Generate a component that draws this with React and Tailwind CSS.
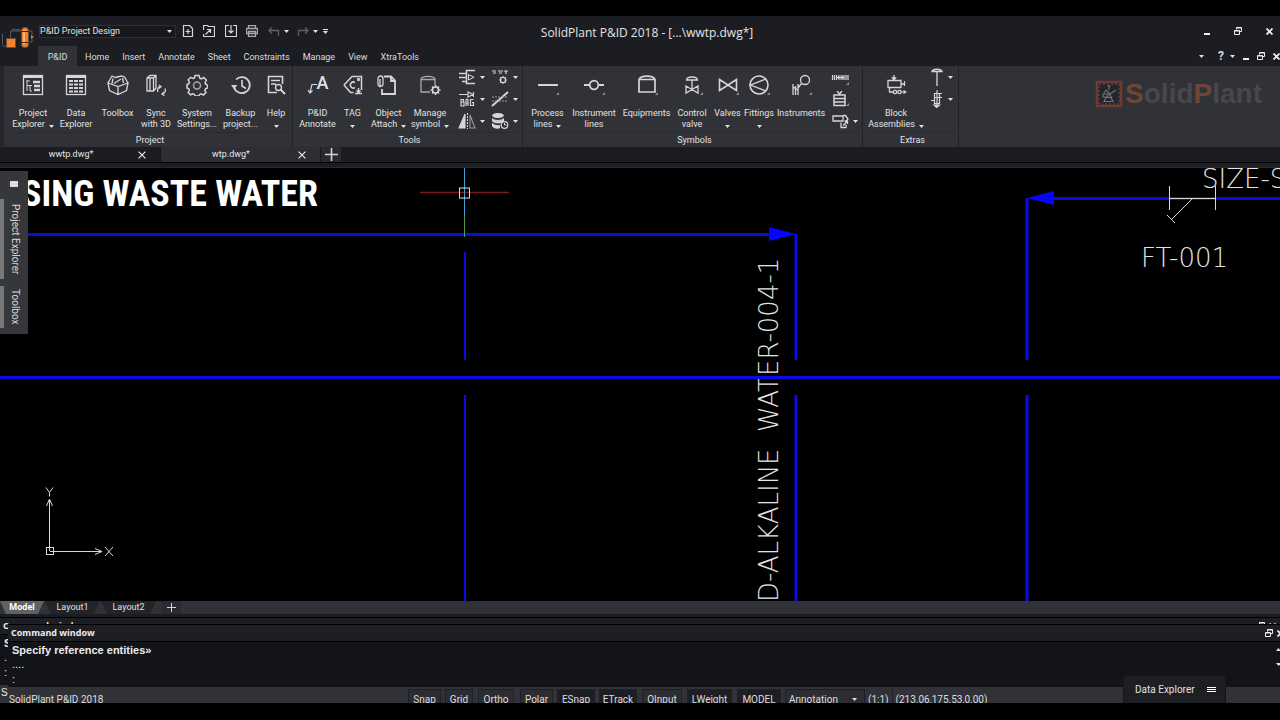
import clsx from "clsx";

const INK = "#d6d6d8";

const Icon = ({ w = 22, h = 22, children, className, sw = 1.3 }) => (
  <svg
    width={w}
    height={h}
    viewBox={`0 0 ${w} ${h}`}
    fill="none"
    stroke={INK}
    strokeWidth={sw}
    className={clsx("shrink-0", className)}
    aria-hidden="true"
  >
    {children}
  </svg>
);

const Caret = ({ className }) => (
  <svg width="5" height="3" viewBox="0 0 5 3" className={clsx("shrink-0", className)} aria-hidden="true">
    <path d="M0 0h5L2.5 3z" fill="#e2e2e2" />
  </svg>
);

const Corner = () => <path d="M22 18v3h-3z" fill="#8c8c90" stroke="none" />;

/* ---------- ribbon icons ---------- */

const icons = {
  projectExplorer: (
    <Icon>
      <rect x="1.5" y="1.5" width="19" height="19" />
      <path d="M1 3h20" strokeWidth="2" />
      <path d="M5 6v11M5 7h3M5 11.5h5M8 11.5V17h2" strokeWidth="1" />
      <path d="M11 8h7M12 12h6M12 16h6" strokeWidth="2.4" />
    </Icon>
  ),
  dataExplorer: (
    <Icon>
      <rect x="1.5" y="1.5" width="19" height="19" />
      <path d="M1 3h20" strokeWidth="2" />
      <path d="M4 7h14M4 10.5h14M4 14h14M4 17.5h14" strokeWidth="2.2" strokeDasharray="4 1" />
    </Icon>
  ),
  toolbox: (
    <Icon>
      <path d="M1 9l10 3.500 10-3.500-1.500 7.500-8.500 4-8.500-4zM11 12.500V20M1 9l4-7 3 1.500M21 9l-3.500-6-3-1L8 3.500M5 9.500l1-5M16.500 9l-1-5M7 9.500l7-4.500" />
    </Icon>
  ),
  sync: (
    <Icon>
      <path d="M2 4l3-2.500h6V14l-2.500 3H2zM2 4h6.500V17M8.500 4L11 1.500M5 4v13" strokeWidth="1.300" />
      <path d="M13 18a4 4 0 0 1 2-5.500M20 14.500a4 4 0 0 1-2.500 5.500M14 11l2 1.500-2 2M19.500 21.500l-2.500-1.500 2-2" strokeWidth="1.300" />
    </Icon>
  ),
  gear: (
    <Icon sw={1.5}>
      <path d="M9 1.500h4l.8 2.600 1.600.7 2.400-1.300 2.600 2.700-1.300 2.500.6 1.500 1.800.8v3l-2 .9-.6 1.500 1 2.200-2.500 2.400-2.200-1.100-1.500.6-.8 1.500H9.200l-.9-1.700-1.500-.6-2.300 1.100-2.300-2.300 1.100-2.300-.6-1.500-1.700-.8V10.500l1.800-.8.6-1.500-1.200-2.400 2.500-2.500 2.300 1.200 1.500-.6z" />
      <circle cx="11" cy="11.500" r="3.500" stroke="#a8a8ab" />
    </Icon>
  ),
  backup: (
    <Icon>
      <path d="M4 13A8 8 0 1 0 6 5.500" strokeWidth="1.800" />
      <path d="M1 11l3 4 3.500-4z" fill={INK} stroke="none" />
      <path d="M12 6v6l4 2.500" strokeWidth="1.600" />
    </Icon>
  ),
  help: (
    <Icon>
      <path d="M12 18.500H3.500v-16h14V10M6 6.500h9M6 10h5" strokeWidth="1.600" />
      <circle cx="13.500" cy="13.500" r="3" strokeWidth="1.400" />
      <path d="M15.500 15.500L20 20" strokeWidth="2" />
    </Icon>
  ),
  tag: (
    <Icon>
      <path d="M2 11L10 2.500h9.500V16M2 11l6.500 7.500h3" strokeWidth="1.500" />
      <path d="M13 8.500a3 3 0 1 0 0 5M13 19.500h7M16.500 14v5M14.500 16.500l2 2 2-2" strokeWidth="1.500" />
      <circle cx="16.500" cy="5.500" r="1" />
    </Icon>
  ),
  attach: (
    <Icon className="-ml-1">
      <path d="M8 2.500h7l4 4V20H6v-5M15 2.500V7h4" strokeWidth="1.800" />
      <path d="M2 4.500a2.500 2.500 0 0 1 5 0v6a1.500 1.500 0 0 1-3 0V5M2 4.500v6a2.500 2.500 0 0 0 3 2" strokeWidth="1.300" />
    </Icon>
  ),
  manage: (
    <Icon>
      <path d="M2 5c1-3.500 13-3.500 14 0v6M2 5v13h9M2 5.500h14" stroke="#a8a8ab" />
      <circle cx="16.500" cy="16" r="3" strokeWidth="1.500" />
      <path d="M16.500 11v2M16.500 19v2M11.500 16h2M19.500 16h2M13 12.500l1.500 1.500M18.500 18l1.500 1.500M13 19.500l1.500-1.500M18.500 14l1.500-1.500" strokeWidth="1.600" />
    </Icon>
  ),
  process: (
    <Icon>
      <path d="M1 11h20" strokeWidth="2" />
      <Corner />
    </Icon>
  ),
  instrumentLine: (
    <Icon>
      <path d="M1 11h5.500M15.500 11H21" strokeWidth="2" />
      <circle cx="11" cy="11" r="4.300" strokeWidth="1.700" />
      <Corner />
    </Icon>
  ),
  equipment: (
    <Icon>
      <path d="M3 5.500V18h16V5.500c-1.500-4.500-14.500-4.500-16 0zM3 5.500h16" strokeWidth="1.700" />
      <Corner />
    </Icon>
  ),
  controlValve: (
    <Icon>
      <path d="M5.500 6C6 2 16 2 16.500 6zM11 6v9M5 12l12 7v-7L5 19z" />
      <Corner />
    </Icon>
  ),
  valve: (
    <Icon>
      <path d="M2.500 5.500v11l17-11v11z" strokeWidth="1.600" />
      <Corner />
    </Icon>
  ),
  fitting: (
    <Icon>
      <circle cx="11" cy="11" r="9" strokeWidth="1.600" />
      <path d="M18 5L2.500 11 18 17" />
      <Corner />
    </Icon>
  ),
  instrument: (
    <Icon>
      <circle cx="15" cy="6" r="4.500" />
      <path d="M11.500 9.500L8 14M3 10v11M5.500 12v9M8 10v11M3 13l5 3" />
      <Corner />
    </Icon>
  ),
  block: (
    <Icon>
      <path d="M3 6.500h13v7H3zM9 1v5M16 10h4M19.500 7v5M4.500 13.500V18h4" />
      <path d="M9 6L7.500 4h3z" />
      <circle cx="10" cy="18" r="1.700" />
      <circle cx="14.500" cy="18" r="1.700" />
      <path d="M16 18h4M18.500 16.500l2.500 1.500-2.500 1.500" strokeWidth="1.200" />
    </Icon>
  ),
};

const small = {
  mapping: (
    <Icon w={18} h={16} sw={1.5}>
      <path d="M1 4.500h7M1 8.500h7M4 12.500h4M17 1.500H8.500v3M17 14.500H8.500v-3M8.500 4v8" />
      <path d="M10.500 5.500v5.500l5.500-2.750z" strokeWidth="1" />
    </Icon>
  ),
  lineTag: (
    <Icon w={18} h={16} sw={1.1}>
      <path d="M1 3.500h9M10 1v5l5-2.500zM15.500 1v5" />
      <path d="M3 8.500h2.500v2.500H3zM3 11h3v4H3zM3 8v7M8 15V9l1-1 1 1v6M8 12h2M15.500 8.500H12.500v6h3v-3H14" strokeWidth="1.200" />
    </Icon>
  ),
  mirror: (
    <Icon w={18} h={16} sw={1.1}>
      <path d="M7 1v14H1z" fill={INK} />
      <path d="M9.500 0v16" strokeDasharray="2 1" />
      <path d="M12 2v13h5z" stroke="#9a9a9d" />
    </Icon>
  ),
  tagGear: (
    <Icon w={18} h={16} sw={1.2}>
      <path d="M1 2h4M2 4h3M7 2h5M13 2h4M15 2v3M8 4h3" />
      <circle cx="12" cy="11" r="2.500" />
      <path d="M12 7v1.500M12 13.500V15M8 11h1.500M14.500 11H16M9.200 8.200l1 1M13.800 12.800l1 1M9.200 13.800l1-1M13.800 9.200l1-1" />
    </Icon>
  ),
  breakLine: (
    <Icon w={18} h={16} sw={1.2}>
      <path d="M1 15L17 1" strokeWidth="2" />
      <path d="M1 6h8M11 6h6M1 10h5M8 10h9" strokeDasharray="2 1" stroke="#9a9a9d" />
    </Icon>
  ),
  database: (
    <Icon w={18} h={16} sw={1}>
      <ellipse cx="7" cy="2.500" rx="5.500" ry="2" fill={INK} />
      <path d="M1.500 5.500c1 2.500 10 2.500 11 0v2.500c-1 2.500-10 2.500-11 0zM1.500 10.500c1 2 6 2.500 7 2v2.500c-3 .5-6.500 0-7-2z" fill={INK} />
      <circle cx="13.500" cy="12" r="3.300" fill="#313237" strokeWidth="1.200" />
      <path d="M13.500 10v2h2" />
    </Icon>
  ),
  flange: (
    <Icon w={18} h={16} sw={1.2}>
      <path d="M1.500 6v5M3.500 6v5M5.500 6v5M13 6v5M15 6v5M17 6v5M5 8.500h8" />
      <path d="M7.500 7h4v3h-4z" />
      <path d="M18 13v3h-3z" fill="#8c8c90" stroke="none" />
    </Icon>
  ),
  column: (
    <Icon w={18} h={16} sw={1.5}>
      <path d="M3 4h11v10.500H3zM3 7.500h11M3 11h11M6 0l2.500 3L11 0" />
      <path d="M18 12v3h-3z" fill="#8c8c90" stroke="none" />
    </Icon>
  ),
  nozzle: (
    <Icon w={18} h={16} sw={1.3}>
      <path d="M2 3h10v5H2zM12 2.500h2.500L17 6l-2.500 3" />
      <path d="M10 9.500v5h5v-3M12 12.500L16.500 8M13.500 8h3v3" />
    </Icon>
  ),
  tee: (
    <Icon w={14} h={18} sw={1.3}>
      <path d="M2 3.500C3 .5 11 .5 12 3.500zM7 3.500V18" />
    </Icon>
  ),
  vessel: (
    <Icon w={14} h={18} sw={1.2}>
      <path d="M4.500 3.500h5v10h-5zM7 0v16M4 7.500h8M9 3.500h3M1 10.500h4" />
      <path d="M4 15h5.500l-2.750 2.500z" fill={INK} />
    </Icon>
  ),
};

/* ---------- ribbon ---------- */

const RibbonButton = ({ icon, lines, caret, className }) => (
  <button
    type="button"
    className={clsx("flex shrink-0 flex-col items-center pt-2 text-[9px] leading-[11px] whitespace-nowrap", className)}
  >
    {icon}
    <span className="mt-3">{lines[0]}</span>
    <span className="flex h-[11px] items-center gap-1">
      {lines[1]}
      {caret && <Caret className="mt-1" />}
    </span>
  </button>
);

const SmallButton = ({ label, icon, caret = true }) => (
  <button type="button" aria-label={label} className="flex h-[22px] items-center gap-1">
    {icon}
    {caret && <Caret />}
  </button>
);

const Group = ({ title, children, className, pad }) => (
  <section className={clsx("flex shrink-0 flex-col border-r border-[#212227]", className)}>
    <div className={clsx("flex h-[66px]", pad)}>{children}</div>
    <h2 className="mr-0.5 ml-1.5 h-[15px] border-t border-[#2a2b30] text-center text-[9px] leading-[15px]">{title}</h2>
  </section>
);

const Ribbon = () => (
  <div className="flex items-start border-l-4 border-[#26262c] bg-[#313237] text-[#e2e2e4]">
    <Group title="Project" className="w-[289px]" pad="pl-2">
      <RibbonButton className="w-[42px]" icon={icons.projectExplorer} lines={["Project", "Explorer"]} caret />
      <RibbonButton className="w-11" icon={icons.dataExplorer} lines={["Data", "Explorer"]} />
      <RibbonButton className="w-[39px]" icon={icons.toolbox} lines={["Toolbox"]} />
      <RibbonButton className="w-[38px]" icon={icons.sync} lines={["Sync", "with 3D"]} />
      <RibbonButton className="w-11" icon={icons.gear} lines={["System", "Settings..."]} />
      <RibbonButton className="w-[43px]" icon={icons.backup} lines={["Backup", "project..."]} />
      <RibbonButton className="w-7" icon={icons.help} lines={["Help"]} caret />
    </Group>
    <Group title="Tools" className="w-[230px]" pad="pl-1.5">
      <RibbonButton
        className="w-[37px]"
        icon={
          <span className="relative flex h-[22px] w-[22px] justify-end">
            <Icon className="absolute inset-0" sw={1.2}>
              <path d="M10 10.500H5L3 18M1 16l2 3 2.500-2.500" />
            </Icon>
            <span className="text-[18px] leading-[18px] font-medium">A</span>
          </span>
        }
        lines={["P&ID", "Annotate"]}
      />
      <RibbonButton className="w-[33px]" icon={icons.tag} lines={["TAG"]} caret />
      <RibbonButton className="w-[39px]" icon={icons.attach} lines={["Object", "Attach"]} caret />
      <RibbonButton className="w-11" icon={icons.manage} lines={["Manage", "symbol"]} caret />
      <div className="grid grid-cols-[33px_33px] content-start pl-1.5">
        <SmallButton label="Map lines" icon={small.mapping} />
        <SmallButton label="Tag settings" icon={small.tagGear} />
        <SmallButton label="Line tag" icon={small.lineTag} />
        <SmallButton label="Break line" icon={small.breakLine} />
        <SmallButton label="Mirror" icon={small.mirror} />
        <SmallButton label="Database" icon={small.database} />
      </div>
    </Group>
    <Group title="Symbols" className="w-[340px]" pad="pl-[5px]">
      <RibbonButton className="w-[39px]" icon={icons.process} lines={["Process", "lines"]} caret />
      <RibbonButton className="w-[54px]" icon={icons.instrumentLine} lines={["Instrument", "lines"]} />
      <RibbonButton className="w-[51px]" icon={icons.equipment} lines={["Equipments"]} />
      <RibbonButton className="w-10" icon={icons.controlValve} lines={["Control", "valve"]} />
      <RibbonButton className="w-[31px]" icon={icons.valve} lines={["Valves"]} caret />
      <RibbonButton className="w-8" icon={icons.fitting} lines={["Fittings"]} caret />
      <RibbonButton className="w-[52px]" icon={icons.instrument} lines={["Instruments"]} />
      <div className="flex flex-col pl-1">
        <SmallButton label="Flange" icon={small.flange} caret={false} />
        <SmallButton label="Column" icon={small.column} caret={false} />
        <SmallButton label="Nozzle" icon={small.nozzle} />
      </div>
    </Group>
    <Group title="Extras" className="w-24" pad="pl-[5px]">
      <RibbonButton className="w-14" icon={icons.block} lines={["Block", "Assemblies"]} caret />
      <div className="flex flex-col pl-1.5">
        <SmallButton label="Tee" icon={small.tee} />
        <SmallButton label="Vessel" icon={small.vessel} />
      </div>
    </Group>
    <div className="ml-auto flex items-center gap-0.5 pt-3 pr-[18px]">
      <svg width="28" height="28" viewBox="0 0 28 28" fill="none" aria-hidden="true">
        <rect x="2" y="2" width="24" height="24" fill="#24252a" stroke="#703a30" strokeWidth="2.500" />
        <path d="M4 4h20v20H4z" stroke="#8a5a4c" strokeWidth=".8" strokeDasharray="2 2" />
        <path d="M9 21.500h9l-2-4h-5zM8 14h5v3H8zM9 13l2-3 4 4 6-4M14 5v5M12.500 6h3M14 14l3 4" stroke="#77777a" strokeWidth="1.100" />
      </svg>
      <span className="font-['Liberation_Sans',sans-serif] text-[28px] leading-8 font-bold text-[#47484d]">
        <span className="text-[#6d4638]">S</span>olid<span className="text-[#6d4638]">P</span>lant
      </span>
    </div>
  </div>
);

/* ---------- title bar and menus ---------- */

const Restore = ({ className }) => (
  <svg width="8" height="8" viewBox="0 0 8 8" fill="none" stroke="#f0f0f0" className={className} aria-hidden="true">
    <path d="M2.500 2.500V.5h5v4h-2M.5 3.500h5v4h-5zM.5 4h5M2.500 1h5" />
  </svg>
);

const Close = ({ className, s = 7, w = 1.8 }) => (
  <svg width={s} height={s} viewBox="0 0 7 7" stroke="#f0f0f0" strokeWidth={w} className={className} aria-hidden="true">
    <path d="M.5 .5l6 6M6.500 .5l-6 6" />
  </svg>
);

const Minimize = () => (
  <svg width="6" height="7" viewBox="0 0 6 7" aria-hidden="true">
    <path d="M0 5h6v2H0z" fill="#f0f0f0" />
  </svg>
);

const AppLogo = () => (
  <svg width="34" height="26" viewBox="0 0 34 26" fill="none" aria-hidden="true">
    <path d="M2.500 8v10M10.500 12V5h11M12 5a2 2 0 0 1 4 0 2 2 0 0 1 4 0M29 5h3v4M32 13v3h-3M2 20h4" stroke="#5a5a5e" />
    <rect x="6.500" y="12.500" width="9" height="9" fill="#f08432" stroke="#6b4a35" />
    <rect x="21.500" y="1.500" width="7" height="20" rx="3" fill="#ee7f2d" stroke="#6b4a35" />
    <path d="M24 4v14" stroke="#ffc58c" strokeWidth="1.500" />
    <path d="M21 5.500h8M21 16.500h8" stroke="#33251f" strokeWidth="1.200" />
    <path d="M31 9l3 2-3 2z" fill="#e07a30" />
  </svg>
);

const QuickAccess = () => (
  <div className="flex items-center">
    <button type="button" aria-label="New" className="w-[21px]">
      <Icon w={12} h={12} sw={1.2}>
        <path d="M1.500.5h6l3 3v8h-9zM6 4v5M3.500 6.500h5" />
      </Icon>
    </button>
    <button type="button" aria-label="Open" className="w-[22px]">
      <Icon w={12} h={12} sw={1.2}>
        <path d="M.5 5V.5h4l1 1h6v10H.5V9M2.500 9.500L7.500 4.500M4 4.500h3.500V8" />
      </Icon>
    </button>
    <button type="button" aria-label="Save" className="w-[21px]">
      <Icon w={12} h={12} sw={1.2}>
        <path d="M4 .5H.5v11h11V.500H8M6 0v8M3.500 5.500L6 8l2.500-2.500" />
      </Icon>
    </button>
    <button type="button" aria-label="Print" className="w-[22px]">
      <Icon w={12} h={12} sw={1.3}>
        <path d="M2.500 3.500v-3h7v3M2.500 8.500h-2v-5h11v5h-2M2.500 6.500h7v5h-7zM3 8.500h6" stroke="#a9a9ab" />
      </Icon>
    </button>
    <button type="button" aria-label="Undo" className="flex w-[29px] items-center gap-1">
      <Icon w={12} h={12}>
        <path d="M10.500 11V5.500H1.500M4 2.500l-3 3 3 3" stroke="#5f6064" />
      </Icon>
      <Caret />
    </button>
    <button type="button" aria-label="Redo" className="flex w-[26px] items-center gap-1">
      <Icon w={12} h={12}>
        <path d="M1.500 11V5.500h9M8 2.500l3 3-3 3" stroke="#5f6064" />
      </Icon>
      <Caret />
    </button>
    <button type="button" aria-label="Customize" className="flex flex-col items-center gap-px">
      <span className="h-px w-[5px] bg-[#e8e8e8]" />
      <Caret />
    </button>
  </div>
);

const TitleBar = () => (
  <header className="flex h-[30px] items-center pl-3.5 text-[#e4e4e6]">
    <div className="flex flex-1 items-center gap-[6px]">
      <label className="relative ml-[25px] flex w-[137px]">
        <span className="sr-only">Workspace</span>
        <select className="h-[13px] w-full appearance-none border border-[#2e2f34] bg-[#17181c] text-[9px] leading-[11px] outline-none">
          <option>P&amp;ID Project Design</option>
        </select>
        <Caret className="absolute top-[5px] right-1" />
      </label>
      <QuickAccess />
    </div>
    <h1 className="pt-1 font-['Open_Sans',sans-serif] text-[12px] leading-4 whitespace-pre">
      SolidPlant P&amp;ID 2018 - [...\wwtp.dwg*]
    </h1>
    <div className="flex flex-1 items-center justify-end gap-6">
      <button type="button" aria-label="Minimize"><Minimize /></button>
      <button type="button" aria-label="Restore"><Restore /></button>
      <button type="button" aria-label="Close" className="mr-[7px]"><Close /></button>
    </div>
  </header>
);

const menus = ["Home", "Insert", "Annotate", "Sheet", "Constraints", "Manage", "View", "XtraTools"];

const MenuBar = () => (
  <nav className="flex h-5 items-center pl-[38px] text-[9px] leading-5 text-[#dcdcde]">
    <button type="button" className="h-5 w-[39px] bg-[#313237] pt-px">P&amp;ID</button>
    <div className="flex gap-[13px] pt-px pl-2">
      {menus.map((m) => (
        <button type="button" key={m}>{m}</button>
      ))}
    </div>
    <div className="ml-auto flex items-center gap-2">
      <button type="button" aria-label="Collapse ribbon" className="pr-1.5"><Caret /></button>
      <button type="button" aria-label="Help" className="flex items-center gap-1.5 text-[12px] font-bold">
        ? <Caret />
      </button>
      <button type="button" aria-label="Minimize drawing"><Minimize /></button>
      <button type="button" aria-label="Restore drawing"><Restore /></button>
      <button type="button" aria-label="Close drawing"><Close /></button>
    </div>
  </nav>
);

const DocTab = ({ name, active }) => (
  <div className={clsx("flex h-[15px] w-40 items-center border-r border-[#17181c]", active ? "bg-[#1c1d22]" : "bg-[#2d2e33]")}>
    <button type="button" className="flex-1 pl-[7px] text-center">{name}</button>
    <button type="button" aria-label={`Close ${name}`} className="mr-3.5 ml-1 flex">
      <Close s={8} w={1} />
    </button>
  </div>
);

const DocTabs = () => (
  <div className="border-b border-[#2a2b2e] bg-[#1c1d22] pb-1">
    <div className="flex h-4 border-b border-black pl-px text-[9px] leading-[15px] text-[#e4e4e6]">
      <DocTab name="wwtp.dwg*" active />
      <DocTab name="wtp.dwg*" />
      <button type="button" aria-label="New drawing" className="flex h-[15px] w-5 items-center justify-center bg-[#2a2b30]">
        <Icon w={13} h={13} sw={1.6}>
          <path d="M6.500 0v13M0 6.500h13" />
        </Icon>
      </button>
    </div>
  </div>
);

/* ---------- drawing area ---------- */

const Drawing = () => (
  <svg className="absolute inset-0 h-full w-full" aria-label="Drawing">
    <g stroke="#d8d8d8" strokeWidth="1" fill="none">
      <path d="M49.500 383V332M46.500 338l3-7 3 7M50 383.500h52M95 380.500l7 3-7 3" />
      <rect x="46.500" y="379.500" width="7" height="7" />
      <path d="M46 319.500l3.500 5 3.500-5M49.500 324.500v4M105 379l8 9M113 379l-8 9" />
    </g>
    <text x="22" y="38" fill="#fff" fontSize="36" className="font-['Roboto_Condensed',sans-serif] font-bold">
      SING WASTE WATER
    </text>
    <g fill="#e4e4e4" fontSize="26" className="font-['DejaVu_Sans',sans-serif] font-extralight">
      <text x="1202" y="20">SIZE-S</text>
      <text x="1141" y="99">FT-001</text>
      <text transform="translate(778 434) rotate(-90)" xmlSpace="preserve">
        {"D-ALKALINE  WATER-004-1"}
      </text>
    </g>
    <g stroke="#0b0be6" strokeWidth="3" fill="none">
      <path d="M28 66.500h748M796 66v126M796 227v210M0 209.500h4000M1027 30v162M1027 227v210M1050 30.500h2950" />
      <path d="M465 84v108M465 227v210" strokeWidth="2" />
    </g>
    <path d="M769 59l27 7-27 7zM1054 23l-27 7 27 7z" fill="#0505ff" />
    <path d="M1169 30.500h46M1169.500 18v24M1215.500 18v24M1192 31l-20 20M1167 47l8 8" stroke="#d8d8d8" fill="none" />
    <path d="M420 24.500h89" stroke="#7a1a1a" strokeWidth="1.500" />
    <path d="M464.500 0v48" stroke="#3f9fd8" />
    <path d="M464.500 48v21" stroke="#4c9a4c" />
    <rect x="459.500" y="20" width="10" height="10" fill="none" stroke="#dcdcdc" />
  </svg>
);

const PaletteTab = ({ name, className }) => (
  <button
    type="button"
    className={clsx("flex w-full items-center justify-center border-l-4 border-[#77787b] pr-0.5 text-[10px] leading-3", className)}
  >
    <span className="[writing-mode:vertical-rl]">{name}</span>
  </button>
);

const SidePalette = () => (
  <aside className="absolute top-[3px] left-0 flex w-7 flex-col items-center gap-[7px] bg-[#36373b] pb-1.5 text-[#d6d6d8]">
    <button type="button" aria-label="Pin palette" className="mt-2.5 mb-[5px] h-1.5 w-2 bg-[#dcdcdc]" />
    <PaletteTab name="Project Explorer" className="h-20" />
    <PaletteTab name="Toolbox" className="h-[42px]" />
  </aside>
);

/* ---------- layout tabs, command window, status ---------- */

const LayoutTab = ({ name, active }) => (
  <button
    type="button"
    className={clsx(
      "h-[13px] text-center [clip-path:polygon(0_0,100%_0,calc(100%_-_6px)_100%,6px_100%)]",
      active ? "w-11 bg-[#606163] font-bold text-white" : "w-[55px] bg-[#232429]"
    )}
  >
    {name}
  </button>
);

const LayoutTabs = () => (
  <div className="flex h-[13px] gap-px bg-[#313237] text-[9px] leading-[13px] text-[#e0e0e2]">
    <LayoutTab name="Model" active />
    <LayoutTab name="Layout1" />
    <LayoutTab name="Layout2" />
    <button type="button" aria-label="New layout" className="ml-1 flex w-5 items-center justify-center bg-[#2a2b30]">
      <Icon w={9} h={9} sw={1}>
        <path d="M4.500 0v9M0 4.500h9" />
      </Icon>
    </button>
  </div>
);

const WindowTitle = ({ className }) => (
  <div className={clsx("flex h-[17px] shrink-0 items-center border-b border-black bg-[#1e1f24] pl-[3px]", className)}>
    <h2 className="font-['Open_Sans',sans-serif] text-[9px] leading-4 font-bold">Command window</h2>
    <span className="ml-auto flex items-center gap-1">
      <button type="button" aria-label="Float"><Restore /></button>
      <button type="button" aria-label="Close command window"><Close /></button>
    </span>
  </div>
);

// Docked window that the floating one mostly covers; only its edge stays in view.
const DockedCommandWindow = () => (
  <section className="flex flex-col border-t border-black bg-[#131418] font-['Liberation_Sans',sans-serif] text-[11px] text-[#ececee]">
    <WindowTitle className="pr-1" />
    <div className="h-[50px] w-2 overflow-hidden pl-1 leading-4">
      <p className="font-bold">S</p>
      <p className="leading-[13px]">.</p>
      <p>:</p>
    </div>
    <p className="h-[18px] bg-[#313237] pl-px text-[10px] leading-4">S</p>
  </section>
);

const CommandWindow = ({ className, children }) => (
  <section className={clsx("flex flex-col border-t border-black bg-[#131418] text-[#ececee]", className)}>
    <WindowTitle />
    <div className="relative h-[45px] shrink-0 pl-1 font-['Liberation_Sans',sans-serif] text-[11px] leading-4">
      <p className="font-bold">Specify reference entities»</p>
      <p className="leading-[13px]">....</p>
      <label className="flex leading-4">
        <span>:</span>
        <input aria-label="Command" className="ml-1 h-4 flex-1 bg-transparent outline-none" />
      </label>
      <span className="absolute top-1.5 right-1 flex w-1 flex-col gap-3 overflow-hidden">
        <Caret className="rotate-180" />
        <Caret />
      </span>
    </div>
    {children}
  </section>
);

const toggles = [
  { name: "Snap", cls: "w-[33px] mr-1" },
  { name: "Grid", cls: "w-7 mr-[5px]" },
  { name: "Ortho", cls: "w-9 mr-[6px]" },
  { name: "Polar", cls: "w-[33px] mr-1" },
  { name: "ESnap", cls: "w-[38px] mr-1", on: true },
  { name: "ETrack", cls: "w-[38px] mr-[5px]", on: true },
  { name: "QInput", cls: "w-10 mr-[5px]" },
  { name: "LWeight", cls: "w-[45px] mr-[5px]", on: true },
  { name: "MODEL", cls: "w-11 mr-1", on: true },
];

const StatusBar = () => (
  <footer className="flex h-4 shrink-0 items-start overflow-hidden bg-[#313237] pt-0.5 text-[10px] leading-[22px] text-[#dcdcde]">
    <span className="w-[400px] shrink-0 pl-px">SolidPlant P&amp;ID 2018</span>
    {toggles.map((t) => (
      <button
        type="button"
        key={t.name}
        aria-pressed={!!t.on}
        className={clsx("h-[22px] shrink-0 border border-[#1f2024] leading-5", t.on ? "bg-[#1d1e23]" : "bg-[#2c2d32]", t.cls)}
      >
        {t.name}
      </button>
    ))}
    <label className="relative flex">
      <span className="sr-only">Annotation scale</span>
      <select className="h-[22px] w-20 appearance-none border border-[#1f2024] bg-[#2c2d32] pl-[3px] leading-5 outline-none">
        <option>Annotation</option>
      </select>
      <Caret className="absolute top-[9px] right-2" />
    </label>
    <span className="border-r border-[#1f2024] px-[3px]">(1:1)</span>
    <span className="pl-[3px]">(213.06,175.53,0.00)</span>
  </footer>
);

const App = () => (
  <div className="flex min-h-screen flex-col bg-black pt-4 pb-[17px] font-['Roboto','Noto_Sans',sans-serif]">
    <div className="relative bg-[#1c1d22]">
      <div className="absolute top-[10px] left-0">
        <AppLogo />
      </div>
      <TitleBar />
      <MenuBar />
    </div>
    <Ribbon />
    <DocTabs />
    <main className="relative min-h-[200px] flex-1 overflow-hidden">
      <Drawing />
      <SidePalette />
    </main>
    <LayoutTabs />
    <div className="relative overflow-hidden bg-[#1c1d22] pt-[3px]">
      <DockedCommandWindow />
      <CommandWindow className="absolute top-[10px] -right-1 bottom-0 left-2">
        <StatusBar />
      </CommandWindow>
      <div className="absolute right-[54px] bottom-0 flex h-7 w-[103px] items-center gap-3 border border-b-0 border-[#141519] bg-[#1e1f24] pl-[11px] text-[10px] text-[#e0e0e2]">
        <button type="button">Data Explorer</button>
        <button type="button" aria-label="Data Explorer menu" className="flex w-[9px] flex-col gap-px">
          <span className="h-px bg-white" />
          <span className="h-px bg-white" />
          <span className="h-px bg-white" />
        </button>
      </div>
    </div>
  </div>
);

export default App;
